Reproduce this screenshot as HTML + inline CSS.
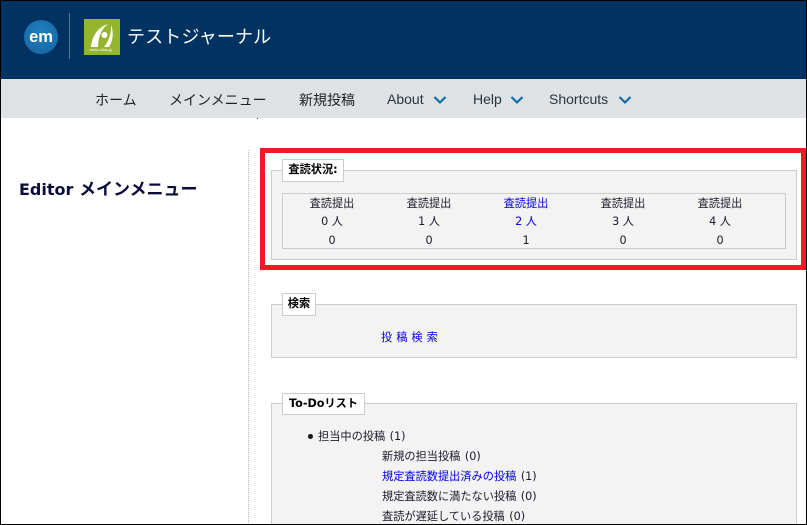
<!DOCTYPE html>
<html><head><meta charset="utf-8">
<style>
html,body{margin:0;padding:0;background:#fff;width:807px;height:525px;overflow:hidden}
#p{width:807px;height:525px;position:relative;overflow:hidden;font-family:"DejaVu Sans","Noto Sans CJK JP",sans-serif;font-size:11.2px;color:#1a1a2a}
.a{position:absolute;white-space:nowrap}
.box{position:absolute;background:#f3f3f3;border:1px solid #ccc;box-sizing:border-box}
.leg{position:absolute;background:#fff;border:1px solid #ccc;box-sizing:border-box;font-weight:bold;font-size:11.2px;color:#000;line-height:20px;text-align:center}
.nav{position:absolute;top:90px;font-size:14px;line-height:20px;color:#2a3440;white-space:nowrap;font-family:"Liberation Sans","Noto Sans CJK JP",sans-serif}
.c{position:absolute;width:90px;text-align:center;font-size:11.2px;line-height:14px;white-space:nowrap;color:#1a1a2a}
.b{color:#0000ee}
.w{word-spacing:1px}
</style></head><body><div id="p">
<div class="a" style="left:0;top:0;width:807px;height:79px;background:#003361"></div>
<div class="a" style="left:0;top:79px;width:807px;height:39px;background:#dfe2e5"></div>

<svg class="a" style="left:24px;top:20px" width="34" height="34" viewBox="0 0 34 34"><defs><radialGradient id="g" cx=".5" cy=".35" r=".7"><stop offset="0" stop-color="#1f7fc0"/><stop offset="1" stop-color="#1868a3"/></radialGradient></defs><circle cx="17" cy="17" r="17" fill="url(#g)"/><text x="17" y="22" text-anchor="middle" font-family="Liberation Sans" font-weight="bold" font-size="16.5" fill="#fff">em</text></svg>
<div class="a" style="left:69px;top:13px;width:1px;height:46px;background:#5a7896"></div>
<svg class="a" style="left:84px;top:19px" width="36" height="36" viewBox="0 0 36 36"><rect width="36" height="36" fill="#94b52c"/><path d="M7 28C8 17 14 8 24 5C17 10 14 19 14 28Z" fill="#fff"/><path d="M27 6C30 13 29 22 25 28L20 28C25 22 27.500 14 27 6Z" fill="#fff"/><circle cx="20.500" cy="16" r="3" fill="#fff"/><text x="17" y="32" text-anchor="middle" font-family="Liberation Sans" font-size="4" fill="#fff">www.o8ao.jp</text></svg>
<div class="a" style="left:127px;top:23px;font-size:18px;line-height:26px;color:#fff;font-family:'Noto Sans CJK JP',sans-serif;letter-spacing:.15px">テストジャーナル</div>

<div class="nav" style="left:95px;color:#222">ホーム</div>
<div class="nav" style="left:169px;color:#222">メインメニュー</div>
<div class="nav" style="left:299px;color:#222">新規投稿</div>
<div class="nav" style="left:387px;top:89px">About</div>
<div class="nav" style="left:473px;top:89px">Help</div>
<div class="nav" style="left:549px;top:89px">Shortcuts</div>
<svg class="a" style="left:433px;top:95px" width="14" height="10"><path d="M1.500 2L7 7.500L12.500 2" fill="none" stroke="#0f6ea8" stroke-width="2.200"/></svg>
<svg class="a" style="left:510px;top:95px" width="14" height="10"><path d="M1.500 2L7 7.500L12.500 2" fill="none" stroke="#0f6ea8" stroke-width="2.200"/></svg>
<svg class="a" style="left:618px;top:95px" width="14" height="10"><path d="M1.500 2L7 7.500L12.500 2" fill="none" stroke="#0f6ea8" stroke-width="2.200"/></svg>
<div class="a" style="left:257px;top:118px;width:1px;height:1px;background:#333"></div>

<div class="a" style="left:19px;top:180px;font-size:16px;line-height:20px;font-weight:bold;color:#0c0c3c">Editor <span style="font-size:17px">メインメニュー</span></div>
<div class="a" style="left:248px;top:150px;height:375px;border-left:1px dotted #bbb"></div>

<!-- red highlight -->
<div class="a" style="left:260px;top:148px;width:546px;height:122px;box-sizing:border-box;border:5px solid #ed1c24"></div>

<!-- 査読状況 -->
<div class="box" style="left:271px;top:170px;width:526px;height:90px"></div>
<div class="leg" style="left:282px;top:159px;width:62px;height:23px">査読状況:</div>
<div class="box" style="left:282px;top:193px;width:504px;height:56px"></div>
<div class="c" style="left:287px;top:197px">査読提出</div><div class="c" style="left:287px;top:215px">0 人</div><div class="c" style="left:287px;top:234px">0</div>
<div class="c" style="left:384px;top:197px">査読提出</div><div class="c" style="left:384px;top:215px">1 人</div><div class="c" style="left:384px;top:234px">0</div>
<div class="c b" style="left:481px;top:197px">査読提出</div><div class="c b" style="left:481px;top:215px">2 人</div><div class="c" style="left:481px;top:234px">1</div>
<div class="c" style="left:578px;top:197px">査読提出</div><div class="c" style="left:578px;top:215px">3 人</div><div class="c" style="left:578px;top:234px">0</div>
<div class="c" style="left:675px;top:197px">査読提出</div><div class="c" style="left:675px;top:215px">4 人</div><div class="c" style="left:675px;top:234px">0</div>

<!-- 検索 -->
<div class="box" style="left:271px;top:304px;width:526px;height:54px"></div>
<div class="leg" style="left:282px;top:293px;width:34px;height:23px">検索</div>
<div class="a b" style="left:381px;top:331px;line-height:14px;letter-spacing:4px">投稿検索</div>

<!-- To-Do -->
<div class="box" style="left:271px;top:403px;width:526px;height:130px"></div>
<div class="leg" style="left:282px;top:393px;width:83px;height:22px">To-Doリスト</div>
<div class="a" style="left:308px;top:434px;width:5px;height:5px;border-radius:50%;background:#111"></div>
<div class="a w" style="left:318px;top:430px;line-height:14px">担当中の投稿 (1)</div>
<div class="a w" style="left:382px;top:450px;line-height:14px">新規の担当投稿 (0)</div>
<div class="a w" style="left:382px;top:470px;line-height:14px"><span class="b">規定査読数提出済みの投稿</span> (1)</div>
<div class="a w" style="left:382px;top:490px;line-height:14px">規定査読数に満たない投稿 (0)</div>
<div class="a w" style="left:382px;top:510px;line-height:14px">査読が遅延している投稿 (0)</div>

<!-- window frame -->
<div class="a" style="left:0;top:0;width:807px;height:525px;box-sizing:border-box;border:1px solid #000"></div>
</div></body></html>
